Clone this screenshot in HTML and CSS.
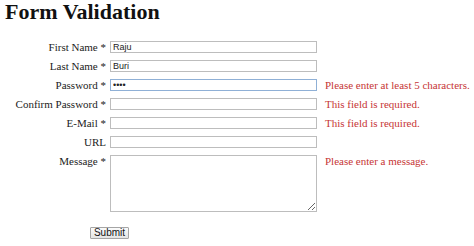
FILE: index.html
```html
<!DOCTYPE html>
<html lang="en">
<head>
  <meta charset="UTF-8">
  <title>Form Validation</title>
  <link rel="stylesheet" href="styles.css">
</head>
<body>
<h1>Form Validation</h1>

<form class="signup" onsubmit="return false">
  <label for="fname">First Name *</label>
  <input type="text" id="fname" value="Raju">
  <span class="error"></span>

  <label for="lname">Last Name *</label>
  <input type="text" id="lname" value="Buri">
  <span class="error"></span>

  <label for="pass">Password *</label>
  <input type="password" id="pass" class="active" value="abcd">
  <span class="error">Please enter at least 5 characters.</span>

  <label for="cpass">Confirm Password *</label>
  <input type="password" id="cpass">
  <span class="error">This field is required.</span>

  <label for="email">E-Mail *</label>
  <input type="text" id="email">
  <span class="error">This field is required.</span>

  <label for="url">URL</label>
  <input type="text" id="url">
  <span class="error"></span>

  <label for="msg" class="top">Message *</label>
  <textarea id="msg"></textarea>
  <span class="error top">Please enter a message.</span>

  <div class="actions">
    <button type="submit">Submit</button>
  </div>
</form>
</body>
</html>
```

FILE: styles.css
```css
body {
  margin: 0;
  padding: 0 5px;
  font-family: "Liberation Serif", "Times New Roman", serif;
  color: #222;
  background: #fff;
}
h1 {
  margin: 0;
  font-size: 22px;
  line-height: 24px;
  font-weight: bold;
  color: #111;
}
.signup {
  margin-top: 17px;
  display: grid;
  grid-template-columns: 101px 207px 1fr;
  column-gap: 4px;
  row-gap: 7px;
  font-size: 11px;
}
.signup label {
  text-align: right;
  align-self: center;
  line-height: 12px;
  white-space: nowrap;
}
.signup input,
.signup textarea {
  box-sizing: border-box;
  width: 207px;
  height: 12px;
  margin: 0;
  padding: 0 2px;
  border: 1px solid #bdbdbd;
  background: #fff;
  font-family: "Liberation Sans", Arial, sans-serif;
  font-size: 9px;
  color: #222;
  outline: none;
}
.signup input.active {
  border-color: #8fb0d6;
}
.signup textarea {
  height: 57px;
  resize: both;
}
.error {
  align-self: center;
  padding-left: 4px;
  line-height: 12px;
  color: #c63535;
  white-space: nowrap;
}
.top {
  align-self: start !important;
}
.actions {
  grid-column: 1 / -1;
  margin-top: 7px;
  padding-left: 85px;
}
.actions button {
  box-sizing: border-box;
  width: 39px;
  height: 12px;
  padding: 0;
  border: 1px solid #a5a5a5;
  border-radius: 1px;
  background: linear-gradient(#fbfbfb, #e4e4e4);
  font-family: "Liberation Sans", Arial, sans-serif;
  font-size: 10px;
  line-height: 10px;
  color: #111;
}
```
